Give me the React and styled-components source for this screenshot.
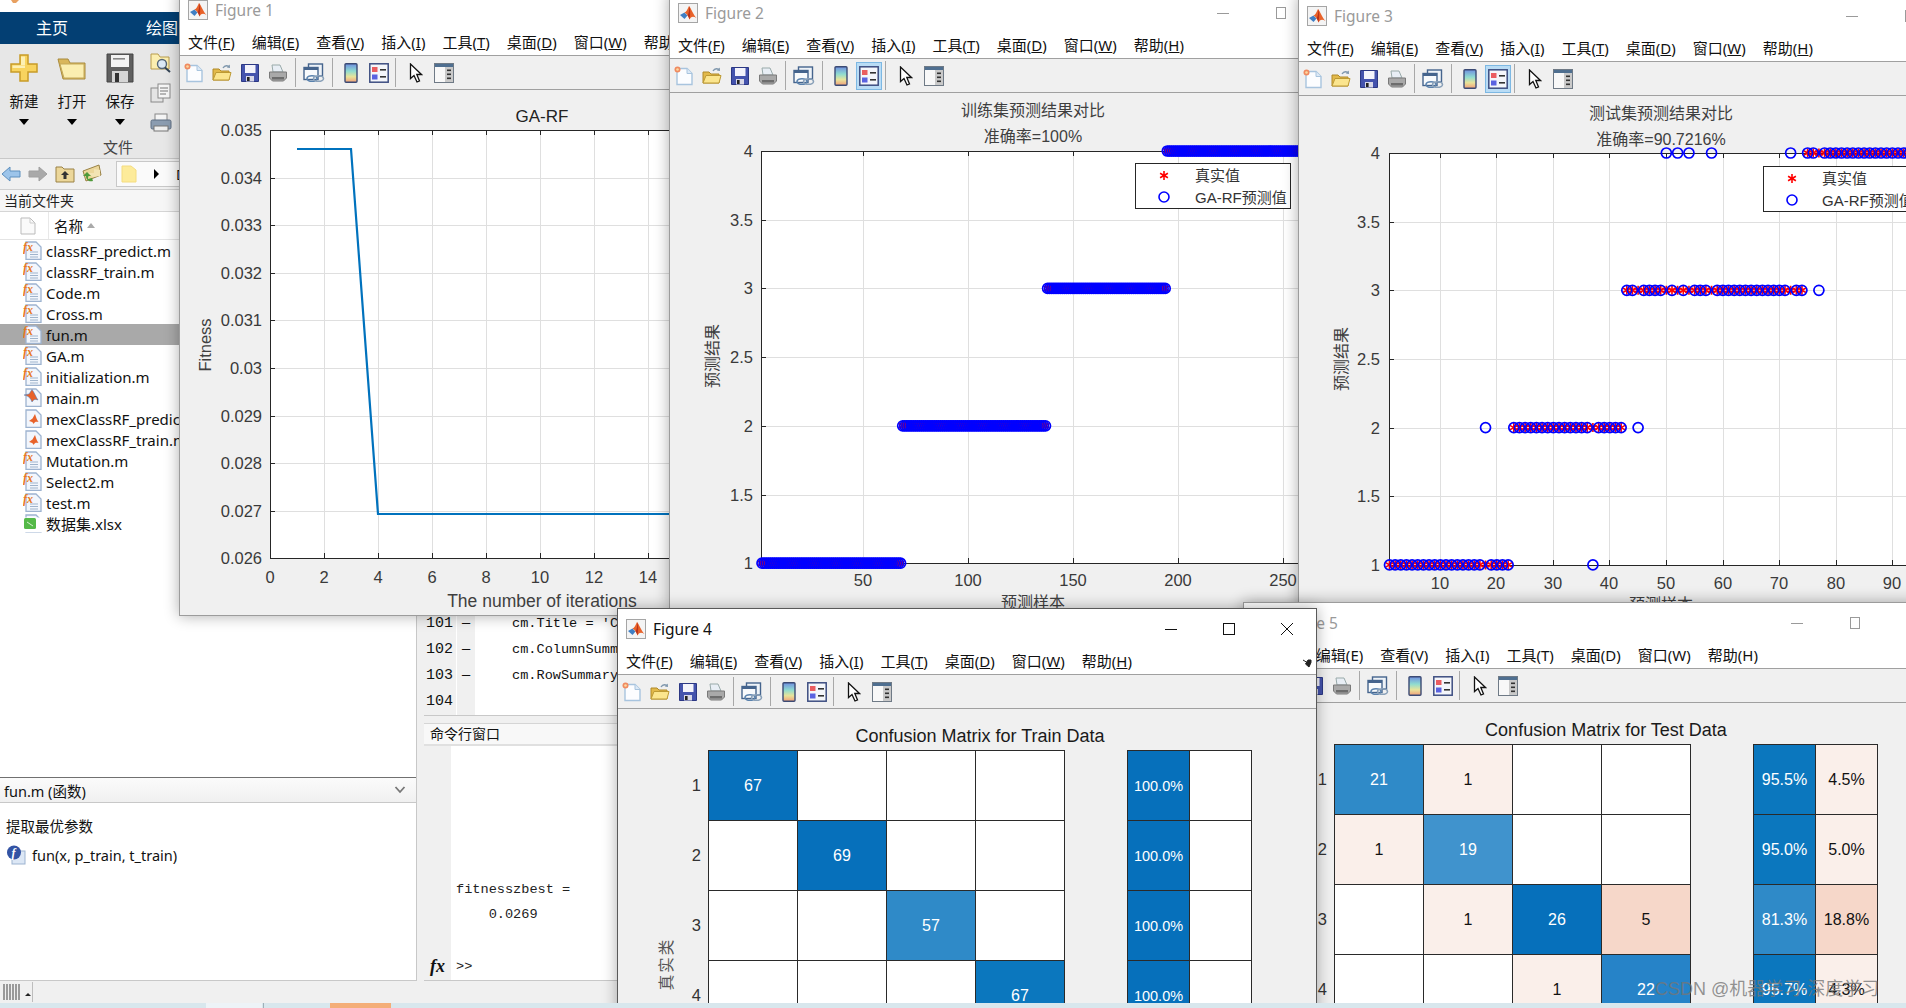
import React from 'react';
import styled, { createGlobalStyle } from 'styled-components';

const UI_FONT = '"Noto Sans", "Noto Sans CJK SC", sans-serif';
const PLOT_FONT = '"Liberation Sans", "Noto Sans CJK SC", sans-serif';
const MONO_FONT = '"Liberation Mono", monospace';

const GlobalStyle = createGlobalStyle`
  html, body {
    margin: 0;
    padding: 0;
    width: 1906px;
    height: 1008px;
    overflow: hidden;
    background: #f0f0f0;
  }
`;

const Root = styled.div`
  position: relative;
  width: 1906px;
  height: 1008px;
  overflow: hidden;
  font-family: ${UI_FONT};
  color: #111;
`;

/* ---------- matlab desktop ---------- */
const Desktop = styled.div`
  display: flex;
  flex-direction: column;
  height: 100%;
`;
const TitleStrip = styled.div`
  height: 12px;
  background: #fff;
  flex: none;
  overflow: hidden;
  svg {
    display: block;
    margin-left: 11px;
  }
`;
const TabStrip = styled.div`
  height: 32px;
  flex: none;
  background: #033f73;
  display: flex;
  align-items: center;
  padding-left: 36px;
  gap: 78px;
`;
const Tab = styled.span`
  color: #fff;
  font-size: 16px;
  line-height: 32px;
`;
const Ribbon = styled.div`
  height: 115px;
  flex: none;
  background: #e7e7e7;
  display: flex;
  flex-direction: column;
  border-bottom: 1px solid #c8c8c8;
  box-sizing: border-box;
`;
const RibbonRow = styled.div`
  display: flex;
  flex: 1;
  padding-top: 9px;
`;
const RibbonButton = styled.div`
  width: 48px;
  display: flex;
  flex-direction: column;
  align-items: center;
  font-size: 14.5px;
  line-height: 20px;
  svg {
    height: 30px;
    margin-bottom: 8px;
  }
`;
const DropArrow = styled.i`
  margin-top: 8px;
  width: 0;
  height: 0;
  border-left: 5px solid transparent;
  border-right: 5px solid transparent;
  border-top: 6px solid #000;
`;
const SmallTools = styled.div`
  display: flex;
  flex-direction: column;
  gap: 10px;
  margin-left: 6px;
`;
const RibbonGroupName = styled.div`
  width: 236px;
  text-align: center;
  font-size: 15px;
  line-height: 22px;
  color: #444;
`;
const AddressBar = styled.div`
  height: 31px;
  flex: none;
  background: #f0f0f0;
  border-bottom: 1px solid #cfcfcf;
  box-sizing: border-box;
  display: flex;
  align-items: center;
  gap: 7px;
  padding-left: 1px;
`;
const PathBox = styled.div`
  margin-left: 7px;
  width: 140px;
  height: 24px;
  background: #fafafa;
  border: 1px solid #c8c8c8;
  display: flex;
  align-items: center;
  gap: 17px;
  padding-left: 4px;
  font-size: 14px;
`;
const PathArrow = styled.i`
  width: 0;
  height: 0;
  border-top: 5px solid transparent;
  border-bottom: 5px solid transparent;
  border-left: 5px solid #000;
`;
const Workspace = styled.div`
  flex: 1;
  min-height: 0;
  display: flex;
  gap: 7px;
  background: #f0f0f0;
`;
const LeftPane = styled.div`
  width: 417px;
  flex: none;
  display: flex;
  flex-direction: column;
  background: #fff;
  border-right: 1px solid #c8c8c8;
  border-bottom: 1px solid #c8c8c8;
  box-sizing: border-box;
`;
const PaneHeader = styled.div`
  height: 22px;
  flex: none;
  background: #f6f6f6;
  border-bottom: 1px solid #d5d5d5;
  box-sizing: border-box;
  font-size: 14px;
  line-height: 21px;
  padding-left: 4px;
  color: #222;
`;
const ColumnHeader = styled.div`
  height: 28px;
  flex: none;
  display: flex;
  align-items: center;
  border-bottom: 1px solid #e4e4e4;
  box-sizing: border-box;
  font-size: 14.5px;
  svg {
    margin-left: 20px;
  }
`;
const ColumnName = styled.div`
  margin-left: 12px;
  height: 100%;
  border-left: 1px solid #e8e8e8;
  padding-left: 5px;
  display: flex;
  align-items: center;
  gap: 4px;
`;
const SortArrow = styled.i`
  width: 0;
  height: 0;
  border-left: 4px solid transparent;
  border-right: 4px solid transparent;
  border-bottom: 5px solid #aaa;
`;
const FileList = styled.div`
  flex: 1;
  min-height: 0;
`;
const FileRow = styled.div`
  height: 21px;
  display: flex;
  align-items: center;
  gap: 4px;
  padding-left: 23px;
  font-size: 15px;
  background: ${(p) => (p.$selected ? '#a9a9a9' : 'transparent')};
  white-space: nowrap;
`;
const DetailHeader = styled.div`
  height: 26px;
  flex: none;
  border-top: 1px solid #707070;
  border-bottom: 1px solid #c8c8c8;
  background: linear-gradient(#fbfbfb, #f0f0f0);
  box-sizing: border-box;
  display: flex;
  align-items: center;
  justify-content: space-between;
  padding: 0 10px 0 4px;
  font-size: 14.5px;
`;
const DetailBody = styled.div`
  height: 177px;
  flex: none;
  padding: 11px 6px;
  box-sizing: border-box;
  font-size: 14.5px;
`;
const DetailLine = styled.div`
  line-height: 24px;
  margin-bottom: 5px;
  display: flex;
  align-items: center;
  gap: 6px;
`;
const RightPane = styled.div`
  flex: 1;
  min-width: 0;
  display: flex;
  flex-direction: column;
  gap: 7px;
`;
const Editor = styled.div`
  flex: 1;
  min-height: 0;
  background: #fff;
  border-bottom: 1px solid #c8c8c8;
  display: flex;
  flex-direction: column;
  justify-content: flex-end;
`;
const CodeLine = styled.div`
  display: flex;
  height: 26px;
  line-height: 26px;
  font-family: ${MONO_FONT};
  font-size: 13.6px;
  white-space: nowrap;
`;
const LineNumber = styled.span`
  width: 33px;
  flex: none;
  background: #f0f0f0;
  border-right: 1px solid #fff;
  text-align: right;
  box-sizing: border-box;
  padding-right: 3px;
  font-size: 15px;
`;
const LineMark = styled.span`
  width: 18px;
  flex: none;
  background: #f0f0f0;
  text-align: center;
`;
const LineCode = styled.span`
  padding-left: 37px;
  color: #111;
`;
const CommandWindow = styled.div`
  height: 258px;
  flex: none;
  display: flex;
  flex-direction: column;
  background: #fff;
  border-bottom: 1px solid #c8c8c8;
  box-sizing: border-box;
`;
const CommandHeader = styled.div`
  height: 23px;
  flex: none;
  background: #f8f8f8;
  border-top: 1px solid #d5d5d5;
  border-bottom: 2px solid #e0e0e0;
  box-sizing: border-box;
  padding-left: 6px;
  font-size: 14px;
  line-height: 20px;
`;
const CommandBody = styled.div`
  flex: 1;
  display: flex;
  min-height: 0;
`;
const CommandGutter = styled.div`
  width: 27px;
  flex: none;
  background: #f0f0f0;
  display: flex;
  align-items: flex-end;
  justify-content: center;
  padding-bottom: 3px;
  box-sizing: border-box;
  font-family: "Liberation Serif", serif;
  font-style: italic;
  font-weight: 700;
  font-size: 18px;
`;
const CommandText = styled.div`
  flex: 1;
  padding: 0 0 1px 5px;
  display: flex;
  flex-direction: column;
  justify-content: flex-end;
  font-family: ${MONO_FONT};
  font-size: 13.6px;
  color: #222;
`;
const CommandLine = styled.div`
  height: 25px;
  line-height: 25px;
  white-space: pre;
  margin-bottom: ${(p) => p.$after || 0}px;
`;
const StatusBar = styled.div`
  height: 22px;
  flex: none;
  background: #f0f0f0;
  display: flex;
  align-items: center;
  padding-left: 3px;
  svg {
    display: block;
  }
`;
const Taskbar = styled.div`
  position: relative;
  z-index: 50;
  height: 5px;
  flex: none;
  background: #d8e7ed;
  display: flex;
`;
const TaskSlot = styled.div`
  margin-left: ${(p) => p.$gap}px;
  width: ${(p) => p.$w}px;
  background: ${(p) => p.$color};
`;

/* ---------- figure windows ---------- */
const Win = styled.div`
  position: absolute;
  left: ${(p) => p.$left}px;
  top: ${(p) => p.$top}px;
  z-index: ${(p) => p.$z};
  width: 700px;
  height: ${(p) => p.$h}px;
  box-sizing: border-box;
  background: #f0f0f0;
  border: 1px solid ${(p) => (p.$active ? '#595959' : '#9c9c9c')};
  box-shadow: 0 0 14px rgba(0, 0, 0, 0.32);
  display: flex;
  flex-direction: column;
  overflow: hidden;
`;
const WinTitle = styled.div`
  height: 39px;
  flex: none;
  background: #fff;
  display: flex;
  align-items: center;
  padding-left: 8px;
  gap: 7px;
  font-size: 15.5px;
  color: ${(p) => (p.$active ? '#111' : '#9a9a9a')};
  position: relative;
`;
const WinControls = styled.div`
  margin-left: auto;
  display: flex;
  align-items: center;
  svg {
    display: block;
    width: 58px;
  }
`;
const Menu = styled.div`
  height: 27px;
  flex: none;
  background: #fff;
  display: flex;
  align-items: center;
  padding-left: 8px;
  gap: 17px;
  font-size: 15px;
  line-height: 27px;
  border-bottom: 1px solid #a0a0a0;
  box-sizing: border-box;
  position: relative;
  white-space: nowrap;
`;
const MenuCorner = styled.svg`
  position: absolute;
  right: 3px;
  bottom: 6px;
`;
const Toolbar = styled.div`
  height: 34px;
  flex: none;
  background: #f0f0f0;
  border-bottom: 1px solid #a0a0a0;
  box-sizing: border-box;
  display: flex;
  align-items: center;
`;
const Tool = styled.div`
  width: ${(p) => (p.$on ? 26 : 28)}px;
  height: 28px;
  flex: none;
  display: flex;
  align-items: center;
  justify-content: center;
  box-sizing: border-box;
  margin: 0 ${(p) => (p.$on ? 1 : 0)}px;
  background: ${(p) => (p.$on ? '#b9dcf5' : 'transparent')};
  border: 1px solid ${(p) => (p.$on ? '#7db8e3' : 'transparent')};
`;
const ToolSep = styled.i`
  width: 1px;
  height: 29px;
  flex: none;
  background: #a8a8a8;
  margin: 0 ${(p) => p.$r}px 0 ${(p) => p.$l}px;
`;
const PlotArea = styled.div`
  flex: 1;
  min-height: 0;
  svg {
    display: block;
  }
`;

const TickText = styled.text`
  font-family: ${PLOT_FONT};
  font-size: 16.5px;
  fill: #3a3a3a;
  text-anchor: ${(p) => p.$anchor};
`;
const PlotTitle = styled.text`
  font-family: ${PLOT_FONT};
  font-size: ${(p) => p.$size || 16}px;
  fill: ${(p) => p.$color || '#3f3f3f'};
  text-anchor: middle;
`;
const LegendText = styled.text`
  font-family: ${PLOT_FONT};
  font-size: 15px;
  fill: #333;
`;

/* ---------- confusion matrix ---------- */
const MatrixBody = styled.div`
  display: grid;
  grid-template-columns: 90px 357px 62px 125px;
  grid-template-rows: 41px 281px;
`;
const MatrixTitle = styled.div`
  grid-column: 2 / 5;
  text-align: center;
  padding-top: 13px;
  line-height: 28px;
  font-family: ${PLOT_FONT};
  font-size: 18px;
  color: #1a1a1a;
`;
const RowTicks = styled.div`
  grid-column: 1;
  position: relative;
  display: grid;
  grid-template-rows: repeat(4, 70px);
  font-family: ${PLOT_FONT};
  font-size: 16.5px;
  color: #333;
`;
const RowTick = styled.div`
  display: flex;
  align-items: center;
  justify-content: flex-end;
  padding-right: 7px;
`;
const YLabel = styled.div`
  position: absolute;
  left: 47px;
  top: 214px;
  transform: translate(-50%, -50%) rotate(-90deg);
  white-space: nowrap;
  font-size: 15.5px;
  letter-spacing: 2px;
  color: #555;
`;
const CellGrid = styled.div`
  grid-column: ${(p) => p.$col};
  display: grid;
  grid-template-columns: repeat(${(p) => p.$cols}, 1fr);
  grid-template-rows: repeat(4, 1fr);
  gap: 1px;
  padding: 1px;
  background: #2a2a2a;
  font-family: ${PLOT_FONT};
`;
const Cell = styled.div`
  display: flex;
  align-items: center;
  justify-content: center;
  background: ${(p) => p.$bg || '#fff'};
  color: ${(p) => (p.$light ? '#fff' : '#111')};
  font-size: ${(p) => p.$size}px;
`;

const Watermark = styled.div`
  position: absolute;
  left: 1655px;
  top: 977px;
  z-index: 40;
  font-family: ${PLOT_FONT};
  font-size: 18px;
  line-height: 24px;
  color: rgba(118, 118, 118, 0.78);
  white-space: nowrap;
`;

/* ---------- icons ---------- */
function MatlabLogo() {
  return (
    <svg width="20" height="20" viewBox="0 0 20 20">
      <rect x="0.5" y="0.5" width="19" height="19" fill="#f4f4f4" stroke="#a5a5a5" />
      <polygon points="2,12 6.5,9.5 9.5,12.5 6.5,16" fill="#3f7fc4" />
      <path d="M11 3C13 5 15.5 12 18.5 15C15.5 13.5 13.5 13 11.5 16.5C10.5 13 9 11 6.5 9.5C8.5 9 9.5 6 11 3Z" fill="#e8622a" />
      <path d="M11 3C11.5 7 11 10 9.5 12.5C10.5 13.5 11 15 11.5 16.5C12.5 11 12.5 6 11 3Z" fill="#b8321a" />
    </svg>
  );
}

function NewIcon() {
  return (
    <svg width="20" height="20" viewBox="0 0 20 20">
      <path d="M3 2.5H13L18 7.5V18.5H3Z" fill="#fcfdff" stroke="#a8c4de" strokeWidth="1.4" />
      <path d="M13 2.5V7.5H18" fill="#dce9f6" stroke="#a8c4de" />
      <circle cx="3.5" cy="3.5" r="3" fill="#f08a60" />
      <circle cx="3.5" cy="3.5" r="1.3" fill="#fbd9a0" />
    </svg>
  );
}
function OpenIcon() {
  return (
    <svg width="20" height="20" viewBox="0 0 20 20">
      <path d="M1 6H7L9 8H17V17H1Z" fill="#e2b94a" stroke="#b08a28" />
      <path d="M1 17L4 9.5H19L17 17Z" fill="#fbe58e" stroke="#bd9a34" />
      <path d="M11 5C12.5 2.5 15 2.5 17 3.5" fill="none" stroke="#7f97ad" strokeWidth="1.4" />
      <path d="M17.8 1.5L18 5L14.8 4.6Z" fill="#7f97ad" />
    </svg>
  );
}
function SaveIcon() {
  return (
    <svg width="20" height="20" viewBox="0 0 20 20">
      <path d="M1.5 1.5H18.5V18.5H1.5Z" fill="#4453ad" stroke="#2c3884" />
      <rect x="5" y="2" width="10.5" height="8" fill="#f3f3fb" />
      <rect x="6" y="13" width="8" height="5.5" fill="#d8d8e8" />
      <rect x="7" y="14" width="2.6" height="4" fill="#222" />
    </svg>
  );
}
function PrintIcon() {
  return (
    <svg width="20" height="20" viewBox="0 0 20 20">
      <path d="M5 9L4 2H12L15 9Z" fill="#e8eef5" stroke="#9aa" />
      <path d="M1.5 9H18.5V15L15.5 18H4.5L1.5 15Z" fill="#a9a9a9" stroke="#7a7a7a" />
      <rect x="4" y="14" width="12" height="2.5" fill="#6d6d6d" />
    </svg>
  );
}
function LinkIcon() {
  return (
    <svg width="22" height="20" viewBox="0 0 22 20">
      <rect x="5.5" y="1" width="14" height="12" fill="#eef3f8" stroke="#45648d" strokeWidth="1.4" />
      <rect x="1" y="4.5" width="14" height="12" fill="#f8fafc" stroke="#45648d" strokeWidth="1.4" />
      <rect x="1" y="4.5" width="14" height="2.5" fill="#45648d" />
      <ellipse cx="9" cy="15.5" rx="5" ry="2.8" fill="none" stroke="#5a82ad" strokeWidth="1.6" />
      <ellipse cx="15.5" cy="15.5" rx="5" ry="2.8" fill="none" stroke="#8aa1b9" strokeWidth="1.6" />
    </svg>
  );
}
function ColorbarIcon() {
  return (
    <svg width="14" height="20" viewBox="0 0 14 20">
      <defs>
        <linearGradient id="cbar" x1="0" y1="0" x2="0" y2="1">
          <stop offset="0" stopColor="#6f8fe0" />
          <stop offset="0.4" stopColor="#8fdcd0" />
          <stop offset="0.7" stopColor="#e8e49a" />
          <stop offset="1" stopColor="#f2a07a" />
        </linearGradient>
      </defs>
      <rect x="1" y="0.8" width="12" height="18.4" rx="1" fill="url(#cbar)" stroke="#3b4a74" strokeWidth="1.4" />
    </svg>
  );
}
function LegendIcon() {
  return (
    <svg width="20" height="20" viewBox="0 0 20 20">
      <rect x="0.8" y="0.8" width="18.4" height="18.4" fill="#f4f6fa" stroke="#3c4d80" strokeWidth="1.5" />
      <rect x="3" y="4" width="5.5" height="5" fill="#ea5d60" />
      <rect x="3" y="11.5" width="5.5" height="5" fill="#5a62e0" />
      <rect x="11" y="6" width="6" height="1.6" fill="#333" />
      <rect x="11" y="13" width="6" height="1.6" fill="#333" />
    </svg>
  );
}
function CursorIcon() {
  return (
    <svg width="14" height="20" viewBox="0 0 14 20">
      <path d="M1.5 1V15.5L5 12.5L8 19L10.5 18L7.8 11.5H12.5Z" fill="#fff" stroke="#111" strokeWidth="1.3" />
    </svg>
  );
}
function PanelIcon() {
  return (
    <svg width="20" height="20" viewBox="0 0 20 20">
      <rect x="0.5" y="0.5" width="19" height="19" fill="#f8f8f8" stroke="#6f7a86" />
      <rect x="1" y="1" width="18" height="3" fill="#4f6f90" />
      <rect x="11" y="4" width="8" height="15" fill="#c9c9c9" />
      <rect x="13" y="6.5" width="4" height="1.6" fill="#333" />
      <rect x="13" y="10.5" width="4" height="1.6" fill="#333" />
      <rect x="13" y="14.5" width="4" height="1.6" fill="#333" />
    </svg>
  );
}
function PlusIcon() {
  return (
    <svg width="30" height="30" viewBox="0 0 30 30">
      <path d="M11 2H19V11H28V19H19V28H11V19H2V11H11Z" fill="#f8d35e" stroke="#c89c28" strokeWidth="1.5" />
      <path d="M12 3.5H16V12H12ZM3.5 12.5H16V15H3.5Z" fill="#fdf0b4" />
    </svg>
  );
}
function FolderBig() {
  return (
    <svg width="30" height="30" viewBox="0 0 30 30">
      <path d="M1 6H11L13 10H28V26H6Z" fill="#d9b65c" stroke="#a88a3c" />
      <path d="M3 11H27V25H7Z" fill="#fbeeb0" stroke="#c4a858" />
    </svg>
  );
}
function FloppyBig() {
  return (
    <svg width="30" height="30" viewBox="0 0 30 30">
      <path d="M2 1H28V29H2Z" fill="#5f5f5f" stroke="#444" />
      <rect x="6" y="2" width="18" height="12" fill="#f2f2f2" />
      <rect x="8" y="5" width="12" height="1.6" fill="#888" />
      <rect x="7" y="18" width="16" height="11" fill="#d5d5d5" />
      <rect x="10" y="20" width="4" height="9" fill="#333" />
    </svg>
  );
}
function SearchFolder() {
  return (
    <svg width="22" height="20" viewBox="0 0 22 20">
      <path d="M1 1H8L10 4H19V16H1Z" fill="#fbeeb0" stroke="#b89c4c" />
      <circle cx="12" cy="11" r="4.5" fill="#dbe9f5" stroke="#567" strokeWidth="1.4" />
      <path d="M15 14.5L20 19" stroke="#345" strokeWidth="2" />
    </svg>
  );
}
function CompareDocs() {
  return (
    <svg width="22" height="20" viewBox="0 0 22 20">
      <rect x="1" y="5" width="12" height="14" fill="#e4e4e4" stroke="#8a8a8a" />
      <rect x="8" y="1" width="12" height="14" fill="#f6f6f6" stroke="#8a8a8a" />
      <path d="M10 5H18M10 8H18M10 11H16" stroke="#777" />
    </svg>
  );
}
function PrinterSmall() {
  return (
    <svg width="22" height="20" viewBox="0 0 22 20">
      <rect x="5" y="1" width="12" height="7" fill="#f5f5f5" stroke="#888" />
      <rect x="1" y="7" width="20" height="9" rx="1.5" fill="#8b9cb0" stroke="#5f6f82" />
      <rect x="4" y="13" width="14" height="5" fill="#eee" stroke="#777" />
    </svg>
  );
}
function NavArrow({ dir, color, edge }) {
  return (
    <svg width="20" height="18" viewBox="0 0 20 18">
      <path
        d={dir === 'left' ? 'M1 9L9 2V6H19V12H9V16Z' : 'M19 9L11 2V6H1V12H11V16Z'}
        fill={color}
        stroke={edge}
      />
    </svg>
  );
}
function UpFolder() {
  return (
    <svg width="20" height="20" viewBox="0 0 20 20">
      <path d="M1 3H7L9 5H19V18H1Z" fill="#ecd79a" stroke="#9a8246" />
      <path d="M10 7L14 11H11.5V15H8.5V11H6Z" fill="#333" />
    </svg>
  );
}
function BrowseFolder() {
  return (
    <svg width="20" height="20" viewBox="0 0 20 20">
      <path d="M1 7L17 1L19 11L4 17Z" fill="#ecd79a" stroke="#9a8246" />
      <path d="M5 9H12V5L18 6V12L11 13Z" fill="#f3e4b4" />
      <path d="M4 12C4 16 7 18 11 17L10 14L6 15C6 14 6 13 6.5 12H9L5 8L1 12Z" fill="#4f9a3a" />
    </svg>
  );
}
function PathFolder() {
  return (
    <svg width="16" height="18" viewBox="0 0 16 18">
      <path d="M1 1H10L15 5V17H1Z" fill="#fdeb9a" stroke="#f4dc80" />
    </svg>
  );
}
function BlankDoc() {
  return (
    <svg width="16" height="18" viewBox="0 0 16 18">
      <path d="M1 1H10L15 6V17H1Z" fill="#fafafa" stroke="#bbb" />
      <path d="M10 1V6H15" fill="none" stroke="#ccc" />
    </svg>
  );
}
const FxLabel = styled.text`
  font-family: "Liberation Serif", serif;
  font-style: italic;
  font-weight: 700;
  font-size: 12px;
  fill: #e8791e;
`;
function FileIcon({ kind }) {
  return (
    <svg width="19" height="19" viewBox="0 0 19 19" style={{ flex: 'none' }}>
      <path d="M3 1H13L18 6V18.5H3Z" fill="#f2f6fc" stroke="#9db3d0" strokeWidth="1.3" />
      {kind === 'fx' && (
        <>
          <path d="M7 11H15M7 13.5H15M7 16H15" stroke="#9fb4cc" />
          <FxLabel x="0" y="10">fx</FxLabel>
        </>
      )}
      {kind === 'mat' && (
        <path d="M1 7L6 6L9 1.5C11 4 13 9 15 12C12 11 11 11 9 14C8 11 6 8 1 7Z" fill="#e8622a" stroke="#3f7fc4" strokeWidth="0.5" />
      )}
      {kind === 'mex' && <path d="M6 12L9.5 9.5L12 5C13 8 14 11 15.5 13C13 12.5 12 12.5 10.5 15C10 13 8.5 12.5 6 12Z" fill="#e8622a" />}
      {kind === 'xls' && (
        <>
          <rect x="1" y="3.5" width="19" height="15" fill="#fff" />
          <rect x="1" y="4" width="12" height="11" rx="1.5" fill="#54b948" />
          <path d="M4 8L10 12" stroke="#d6f0d0" />
        </>
      )}
    </svg>
  );
}
function FunctionIcon() {
  return (
    <svg width="20" height="20" viewBox="0 0 20 20">
      <rect x="6" y="6" width="13" height="13" fill="#dce7f5" stroke="#9db3d0" />
      <circle cx="8" cy="7.5" r="7" fill="#3353a4" />
      <text x="5.5" y="12" fill="#fff" fontFamily='"Liberation Serif", serif' fontStyle="italic" fontWeight="700" fontSize="12">f</text>
    </svg>
  );
}
function Chevron() {
  return (
    <svg width="12" height="10" viewBox="0 0 12 10">
      <path d="M1.5 2L6 7L10.5 2" fill="none" stroke="#777" strokeWidth="1.8" />
    </svg>
  );
}
function GripIcon() {
  return (
    <svg width="30" height="20" viewBox="0 0 30 20">
      {[0, 3, 6, 9, 12, 15].map((x) => (
        <rect key={x} x={x} y="2" width="2" height="16" fill="#9a9a9a" />
      ))}
      <path d="M22 14L25 11L28 14Z" fill="#222" />
      <rect x="29" y="0" width="1" height="20" fill="#bdbdbd" />
    </svg>
  );
}

function WindowButtons({ active }) {
  const stroke = active ? '#111' : '#9a9a9a';
  return (
    <WinControls>
      <svg height="16" viewBox="0 0 58 16">
        <path d="M23 8.5H35" stroke={stroke} />
      </svg>
      <svg height="16" viewBox="0 0 58 16">
        <rect x={active ? 23.5 : 24.5} y="2.5" width={active ? 11 : 9} height="11" fill="none" stroke={stroke} />
      </svg>
      <svg height="16" viewBox="0 0 58 16">
        <path d="M23 2L35 14M35 2L23 14" stroke={stroke} />
      </svg>
    </WinControls>
  );
}

const MENU = [
  ['文件', 'F'],
  ['编辑', 'E'],
  ['查看', 'V'],
  ['插入', 'I'],
  ['工具', 'T'],
  ['桌面', 'D'],
  ['窗口', 'W'],
  ['帮助', 'H'],
];

function Figure({ name, left, top, h, z, active, legendOn, plain, children }) {
  return (
    <Win $left={left} $top={top} $h={h} $z={z} $active={active}>
      <WinTitle $active={active}>
        <MatlabLogo />
        {name}
        <WindowButtons active={active} />
      </WinTitle>
      <Menu>
        {MENU.map(([label, key]) => (
          <span key={key}>
            {label}({plain ? key : <u>{key}</u>})
          </span>
        ))}
        {active && (
          <MenuCorner width="11" height="9" viewBox="0 0 11 9">
            <path d="M1 1L6 4M6 1H9V3.5L7 8L3.5 5Z" fill="#222" stroke="#222" />
          </MenuCorner>
        )}
      </Menu>
      <Toolbar>
        <Tool><NewIcon /></Tool>
        <Tool><OpenIcon /></Tool>
        <Tool><SaveIcon /></Tool>
        <Tool><PrintIcon /></Tool>
        <ToolSep $l={3} $r={4} />
        <Tool><LinkIcon /></Tool>
        <ToolSep $l={4} $r={4} />
        <Tool><ColorbarIcon /></Tool>
        <Tool $on={legendOn}><LegendIcon /></Tool>
        <ToolSep $l={2} $r={6} />
        <Tool><CursorIcon /></Tool>
        <Tool><PanelIcon /></Tool>
      </Toolbar>
      <PlotArea>{children}</PlotArea>
    </Win>
  );
}

/* plots use page coordinates: the viewBox is the window's plot area */
function PlotSvg({ left, top, h, children }) {
  return (
    <svg width="698" height={h - 101} viewBox={`${left + 1} ${top + 100} 698 ${h - 101}`}>
      {children}
    </svg>
  );
}

function Axes({ x0, y0, x1, y1, xTicks, yTicks, xLabelY, labelGap }) {
  return (
    <g>
      <rect x={x0} y={y0} width={x1 - x0} height={y1 - y0} fill="#fff" />
      {xTicks.map((t) => (
        <line key={t.at} x1={t.at + 0.5} x2={t.at + 0.5} y1={y0} y2={y1} stroke="#dfdfdf" />
      ))}
      {yTicks.map((t) => (
        <line key={t.at} x1={x0} x2={x1} y1={t.at + 0.5} y2={t.at + 0.5} stroke="#dfdfdf" />
      ))}
      {xTicks.map((t) => (
        <g key={t.at}>
          <path d={`M${t.at + 0.5} ${y0}v5M${t.at + 0.5} ${y1}v-5`} stroke="#262626" />
          <TickText x={t.at} y={xLabelY} $anchor="middle">{t.label}</TickText>
        </g>
      ))}
      {yTicks.map((t) => (
        <g key={t.at}>
          <path d={`M${x0} ${t.at + 0.5}h5`} stroke="#262626" />
          <TickText x={x0 - labelGap} y={t.at + 6} $anchor="end">{t.label}</TickText>
        </g>
      ))}
      <rect x={x0 + 0.5} y={y0 + 0.5} width={x1 - x0} height={y1 - y0} fill="none" stroke="#262626" />
    </g>
  );
}

function Star({ x, y, r = 4.5 }) {
  const d = r * 0.87;
  const e = r * 0.5;
  return (
    <path
      d={`M${x} ${y - r}V${y + r}M${x - d} ${y - e}L${x + d} ${y + e}M${x - d} ${y + e}L${x + d} ${y - e}`}
      stroke="#f00"
      strokeWidth="1.6"
      fill="none"
    />
  );
}

function Legend({ x, y, w, textX }) {
  return (
    <g>
      <rect x={x + 0.5} y={y + 0.5} width={w} height="45" fill="#fff" stroke="#262626" />
      <Star x={x + 29} y={y + 12.5} />
      <LegendText x={textX} y={y + 18}>真实值</LegendText>
      <circle cx={x + 29} cy={y + 34} r="5" fill="none" stroke="#00f" strokeWidth="1.6" />
      <LegendText x={textX} y={y + 39.5}>GA-RF预测值</LegendText>
    </g>
  );
}

function Series({ points }) {
  return (
    <g>
      {points.map((p) => <Star key={p.x} x={p.x} y={p.t} />)}
      {points.map((p) => (
        <circle key={p.x} cx={p.x} cy={p.p} r="5" fill="none" stroke="#00f" strokeWidth="1.7" />
      ))}
    </g>
  );
}

function FitnessPlot() {
  const xTicks = [0, 2, 4, 6, 8, 10, 12, 14, 16].map((v) => ({ at: 270 + v * 27, label: v }));
  const yTicks = ['0.035', '0.034', '0.033', '0.032', '0.031', '0.03', '0.029', '0.028', '0.027', '0.026'].map(
    (label, i) => ({ at: Math.round(129 + i * 47.6), label })
  );
  return (
    <PlotSvg left={179} top={-11} h={627}>
      <PlotTitle x="542" y="121" $size={17} $color="#222">GA-RF</PlotTitle>
      <Axes x0={270} y0={129} x1={900} y1={557} xTicks={xTicks} yTicks={yTicks} xLabelY={582} labelGap={8} />
      <path d="M297 148H351L378 513H900" fill="none" stroke="#0072bd" strokeWidth="2.2" />
      <PlotTitle x="542" y="606" $size={17.5}>The number of iterations</PlotTitle>
      <PlotTitle x="0" y="0" $size={16.5} transform="translate(211 344) rotate(-90)">Fitness</PlotTitle>
    </PlotSvg>
  );
}

const yOf = (y0, step, v) => y0 + (4 - v) * step;

function TrainPlot() {
  const yT = (v) => yOf(150, 137.4, v);
  const xOf = (n) => 762 + (n - 1) * 2.1;
  const classOf = (n) => (n <= 67 ? 1 : n <= 136 ? 2 : n <= 193 ? 3 : 4);
  const points = [];
  for (let n = 1; n <= 270; n += 1) {
    const c = classOf(n);
    points.push({ x: xOf(n), t: yT(c), p: yT(c) });
  }
  const xTicks = [50, 100, 150, 200, 250].map((v) => ({ at: Math.round(863 + (v - 50) * 2.1), label: v }));
  const yTicks = [4, 3.5, 3, 2.5, 2, 1.5, 1].map((v) => ({ at: Math.round(yT(v)), label: v }));
  return (
    <PlotSvg left={669} top={-8} h={618}>
      <PlotTitle x="1033" y="115">训练集预测结果对比</PlotTitle>
      <PlotTitle x="1033" y="141">准确率=100%</PlotTitle>
      <Axes x0={761} y0={150} x1={1330} y1={562} xTicks={xTicks} yTicks={yTicks} xLabelY={585} labelGap={8} />
      <Series points={points} />
      <Legend x={1135} y={162} w={155} textX={1195} />
      <PlotTitle x="1033" y="607">预测样本</PlotTitle>
      <PlotTitle x="0" y="0" transform="translate(718 355) rotate(-90)">预测结果</PlotTitle>
    </PlotSvg>
  );
}

function TestPlot() {
  const yT = (v) => yOf(152, 137.3, v);
  const xOf = (n) => 1389.5 + (n - 1) * 5.65;
  const truth = (n) => (n <= 22 ? 1 : n <= 42 ? 2 : n <= 74 ? 3 : 4);
  const wrong = { 18: 2, 37: 1, 45: 2, 50: 4, 52: 4, 54: 4, 58: 4, 72: 4, 77: 3 };
  const points = [];
  for (let n = 1; n <= 97; n += 1) {
    const t = truth(n);
    points.push({ x: xOf(n), t: yT(t), p: yT(wrong[n] || t) });
  }
  const xTicks = [10, 20, 30, 40, 50, 60, 70, 80, 90].map((v) => ({ at: Math.round(1439.6 + (v - 10) * 5.66), label: v }));
  const yTicks = [4, 3.5, 3, 2.5, 2, 1.5, 1].map((v) => ({ at: Math.round(yT(v)), label: v }));
  return (
    <PlotSvg left={1298} top={-5} h={620}>
      <PlotTitle x="1661" y="118">测试集预测结果对比</PlotTitle>
      <PlotTitle x="1661" y="144">准确率=90.7216%</PlotTitle>
      <Axes x0={1389} y0={152} x1={1960} y1={564} xTicks={xTicks} yTicks={yTicks} xLabelY={588} labelGap={9} />
      <Series points={points} />
      <Legend x={1763} y={165} w={190} textX={1822} />
      <PlotTitle x="1661" y="609">预测样本</PlotTitle>
      <PlotTitle x="0" y="0" transform="translate(1347 358) rotate(-90)">预测结果</PlotTitle>
    </PlotSvg>
  );
}

const DARK = '#0670bb';
const D2 = '#0b77be';
const D3 = '#2683c8';
const MID = '#2f8ac8';
const MID2 = '#4093cd';
const PALE = '#faefea';
const PEACH = '#f6d7c9';

function ConfusionMatrix({ title, cells, summary, summarySize }) {
  return (
    <MatrixBody>
      <MatrixTitle>{title}</MatrixTitle>
      <RowTicks>
        {[1, 2, 3, 4].map((n) => <RowTick key={n}>{n}</RowTick>)}
        <YLabel>真实类</YLabel>
      </RowTicks>
      <CellGrid $col={2} $cols={4}>
        {cells.flat().map((c, i) => (
          <Cell key={i} $bg={c && c[1]} $light={c && c[1] !== PALE && c[1] !== PEACH} $size={16}>
            {c && c[0]}
          </Cell>
        ))}
      </CellGrid>
      <CellGrid $col={4} $cols={2}>
        {summary.flat().map((c, i) => (
          <Cell key={i} $bg={c && c[1]} $light={c && c[1] !== PALE && c[1] !== PEACH} $size={summarySize}>
            {c && c[0]}
          </Cell>
        ))}
      </CellGrid>
    </MatrixBody>
  );
}

const TRAIN_CELLS = [
  [[67, DARK], null, null, null],
  [null, [69, DARK], null, null],
  [null, null, [57, MID], null],
  [null, null, null, [67, D2]],
];
const TRAIN_SUMMARY = [
  [['100.0%', DARK], null],
  [['100.0%', DARK], null],
  [['100.0%', DARK], null],
  [['100.0%', DARK], null],
];
const TEST_CELLS = [
  [[21, MID], [1, PALE], null, null],
  [[1, PALE], [19, MID2], null, null],
  [null, [1, PALE], [26, DARK], [5, PEACH]],
  [null, null, [1, PALE], [22, D3]],
];
const TEST_SUMMARY = [
  [['95.5%', D2], ['4.5%', PALE]],
  [['95.0%', D2], ['5.0%', PALE]],
  [['81.3%', MID], ['18.8%', PEACH]],
  [['95.7%', D2], ['4.3%', PALE]],
];

const FILES = [
  ['classRF_predict.m', 'fx'],
  ['classRF_train.m', 'fx'],
  ['Code.m', 'fx'],
  ['Cross.m', 'fx'],
  ['fun.m', 'fx'],
  ['GA.m', 'fx'],
  ['initialization.m', 'fx'],
  ['main.m', 'mat'],
  ['mexClassRF_predict.mexw64', 'mex'],
  ['mexClassRF_train.mexw64', 'mex'],
  ['Mutation.m', 'fx'],
  ['Select2.m', 'fx'],
  ['test.m', 'fx'],
  ['数据集.xlsx', 'xls'],
];

const CODE = [
  [101, "cm.Title = 'Confusion Matrix for Train Data';", true],
  [102, "cm.ColumnSummary = 'column-normalized';", true],
  [103, "cm.RowSummary = 'row-normalized';", true],
  [104, '', false],
];

function MatlabDesktop() {
  return (
    <Desktop>
      <TitleStrip>
        <svg width="8" height="3" viewBox="0 0 8 3"><path d="M0 0H8L5 3H2Z" fill="#e8a060" /></svg>
      </TitleStrip>
      <TabStrip>
        <Tab>主页</Tab>
        <Tab>绘图</Tab>
      </TabStrip>
      <Ribbon>
        <RibbonRow>
          <RibbonButton><PlusIcon />新建<DropArrow /></RibbonButton>
          <RibbonButton><FolderBig />打开<DropArrow /></RibbonButton>
          <RibbonButton><FloppyBig />保存<DropArrow /></RibbonButton>
          <SmallTools>
            <SearchFolder />
            <CompareDocs />
            <PrinterSmall />
          </SmallTools>
        </RibbonRow>
        <RibbonGroupName>文件</RibbonGroupName>
      </Ribbon>
      <AddressBar>
        <NavArrow dir="left" color="#9cc4ea" edge="#5d8fbe" />
        <NavArrow dir="right" color="#a9a9a9" edge="#a0a0a0" />
        <UpFolder />
        <BrowseFolder />
        <PathBox><PathFolder /><PathArrow />D:</PathBox>
      </AddressBar>
      <Workspace>
        <LeftPane>
          <PaneHeader>当前文件夹</PaneHeader>
          <ColumnHeader>
            <BlankDoc />
            <ColumnName>名称<SortArrow /></ColumnName>
          </ColumnHeader>
          <FileList>
            {FILES.map(([file, kind]) => (
              <FileRow key={file} $selected={file === 'fun.m'}>
                <FileIcon kind={kind} />
                {file}
              </FileRow>
            ))}
          </FileList>
          <DetailHeader>fun.m  (函数)<Chevron /></DetailHeader>
          <DetailBody>
            <DetailLine>提取最优参数</DetailLine>
            <DetailLine><FunctionIcon />fun(x, p_train, t_train)</DetailLine>
          </DetailBody>
        </LeftPane>
        <RightPane>
          <Editor>
            {CODE.map(([no, text, mark]) => (
              <CodeLine key={no}>
                <LineNumber>{no}</LineNumber>
                <LineMark>{mark ? '—' : ''}</LineMark>
                <LineCode>{text}</LineCode>
              </CodeLine>
            ))}
          </Editor>
          <CommandWindow>
            <CommandHeader>命令行窗口</CommandHeader>
            <CommandBody>
              <CommandGutter>fx</CommandGutter>
              <CommandText>
                <CommandLine>fitnesszbest =</CommandLine>
                <CommandLine $after={27}>    0.0269</CommandLine>
                <CommandLine>&gt;&gt;</CommandLine>
              </CommandText>
            </CommandBody>
          </CommandWindow>
        </RightPane>
      </Workspace>
      <StatusBar><GripIcon /></StatusBar>
      <Taskbar>
        <TaskSlot $gap={206} $w={56} $color="#edf3f7" />
        <TaskSlot $gap={1} $w={1} $color="#9fb0b8" />
        <TaskSlot $gap={66} $w={61} $color="#f4ae78" />
      </Taskbar>
    </Desktop>
  );
}

export default function App() {
  return (
    <Root>
      <GlobalStyle />
      <MatlabDesktop />
      <Figure name="Figure 1" left={179} top={-11} h={627} z={1}>
        <FitnessPlot />
      </Figure>
      <Figure name="Figure 2" left={669} top={-8} h={618} z={2} legendOn>
        <TrainPlot />
      </Figure>
      <Figure name="Figure 3" left={1298} top={-5} h={620} z={3} legendOn>
        <TestPlot />
      </Figure>
      <Figure name="Figure 5" left={1243} top={602} h={500} z={4} plain>
        <ConfusionMatrix title="Confusion Matrix for Test Data" cells={TEST_CELLS} summary={TEST_SUMMARY} summarySize={16} />
      </Figure>
      <Figure name="Figure 4" left={617} top={608} h={500} z={5} active>
        <ConfusionMatrix title="Confusion Matrix for Train Data" cells={TRAIN_CELLS} summary={TRAIN_SUMMARY} summarySize={14.5} />
      </Figure>
      <Watermark>CSDN @机器学习-深度学习</Watermark>
    </Root>
  );
}
